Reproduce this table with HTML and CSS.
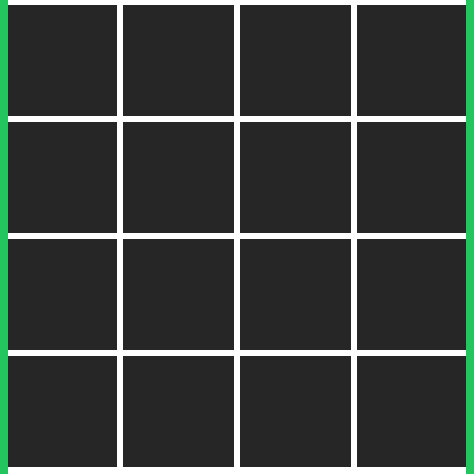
FILE: index.html
```html
<!DOCTYPE html>
<html>
<head>
<meta charset="utf-8">
<link rel="stylesheet" href="styles.css">
</head>
<body>
<div class="board">
  <div class="cell"></div><div class="cell"></div><div class="cell"></div><div class="cell"></div>
  <div class="cell"></div><div class="cell"></div><div class="cell"></div><div class="cell"></div>
  <div class="cell"></div><div class="cell"></div><div class="cell"></div><div class="cell"></div>
  <div class="cell"></div><div class="cell"></div><div class="cell"></div><div class="cell"></div>
</div>
</body>
</html>
```
FILE: styles.css
```css
html, body {
  margin: 0;
  padding: 0;
  background: #ffffff;
}
.board {
  box-sizing: border-box;
  width: 474px;
  height: 474px;
  border-left: 8px solid #22c55e;
  border-right: 8px solid #22c55e;
  padding: 5px 0 7px 0;
  display: grid;
  grid-template-columns: 109px 111px 111px 109px;
  grid-template-rows: repeat(4, 111px);
  column-gap: 6px;
  row-gap: 6px;
}
.cell {
  background: #262626;
}
```
